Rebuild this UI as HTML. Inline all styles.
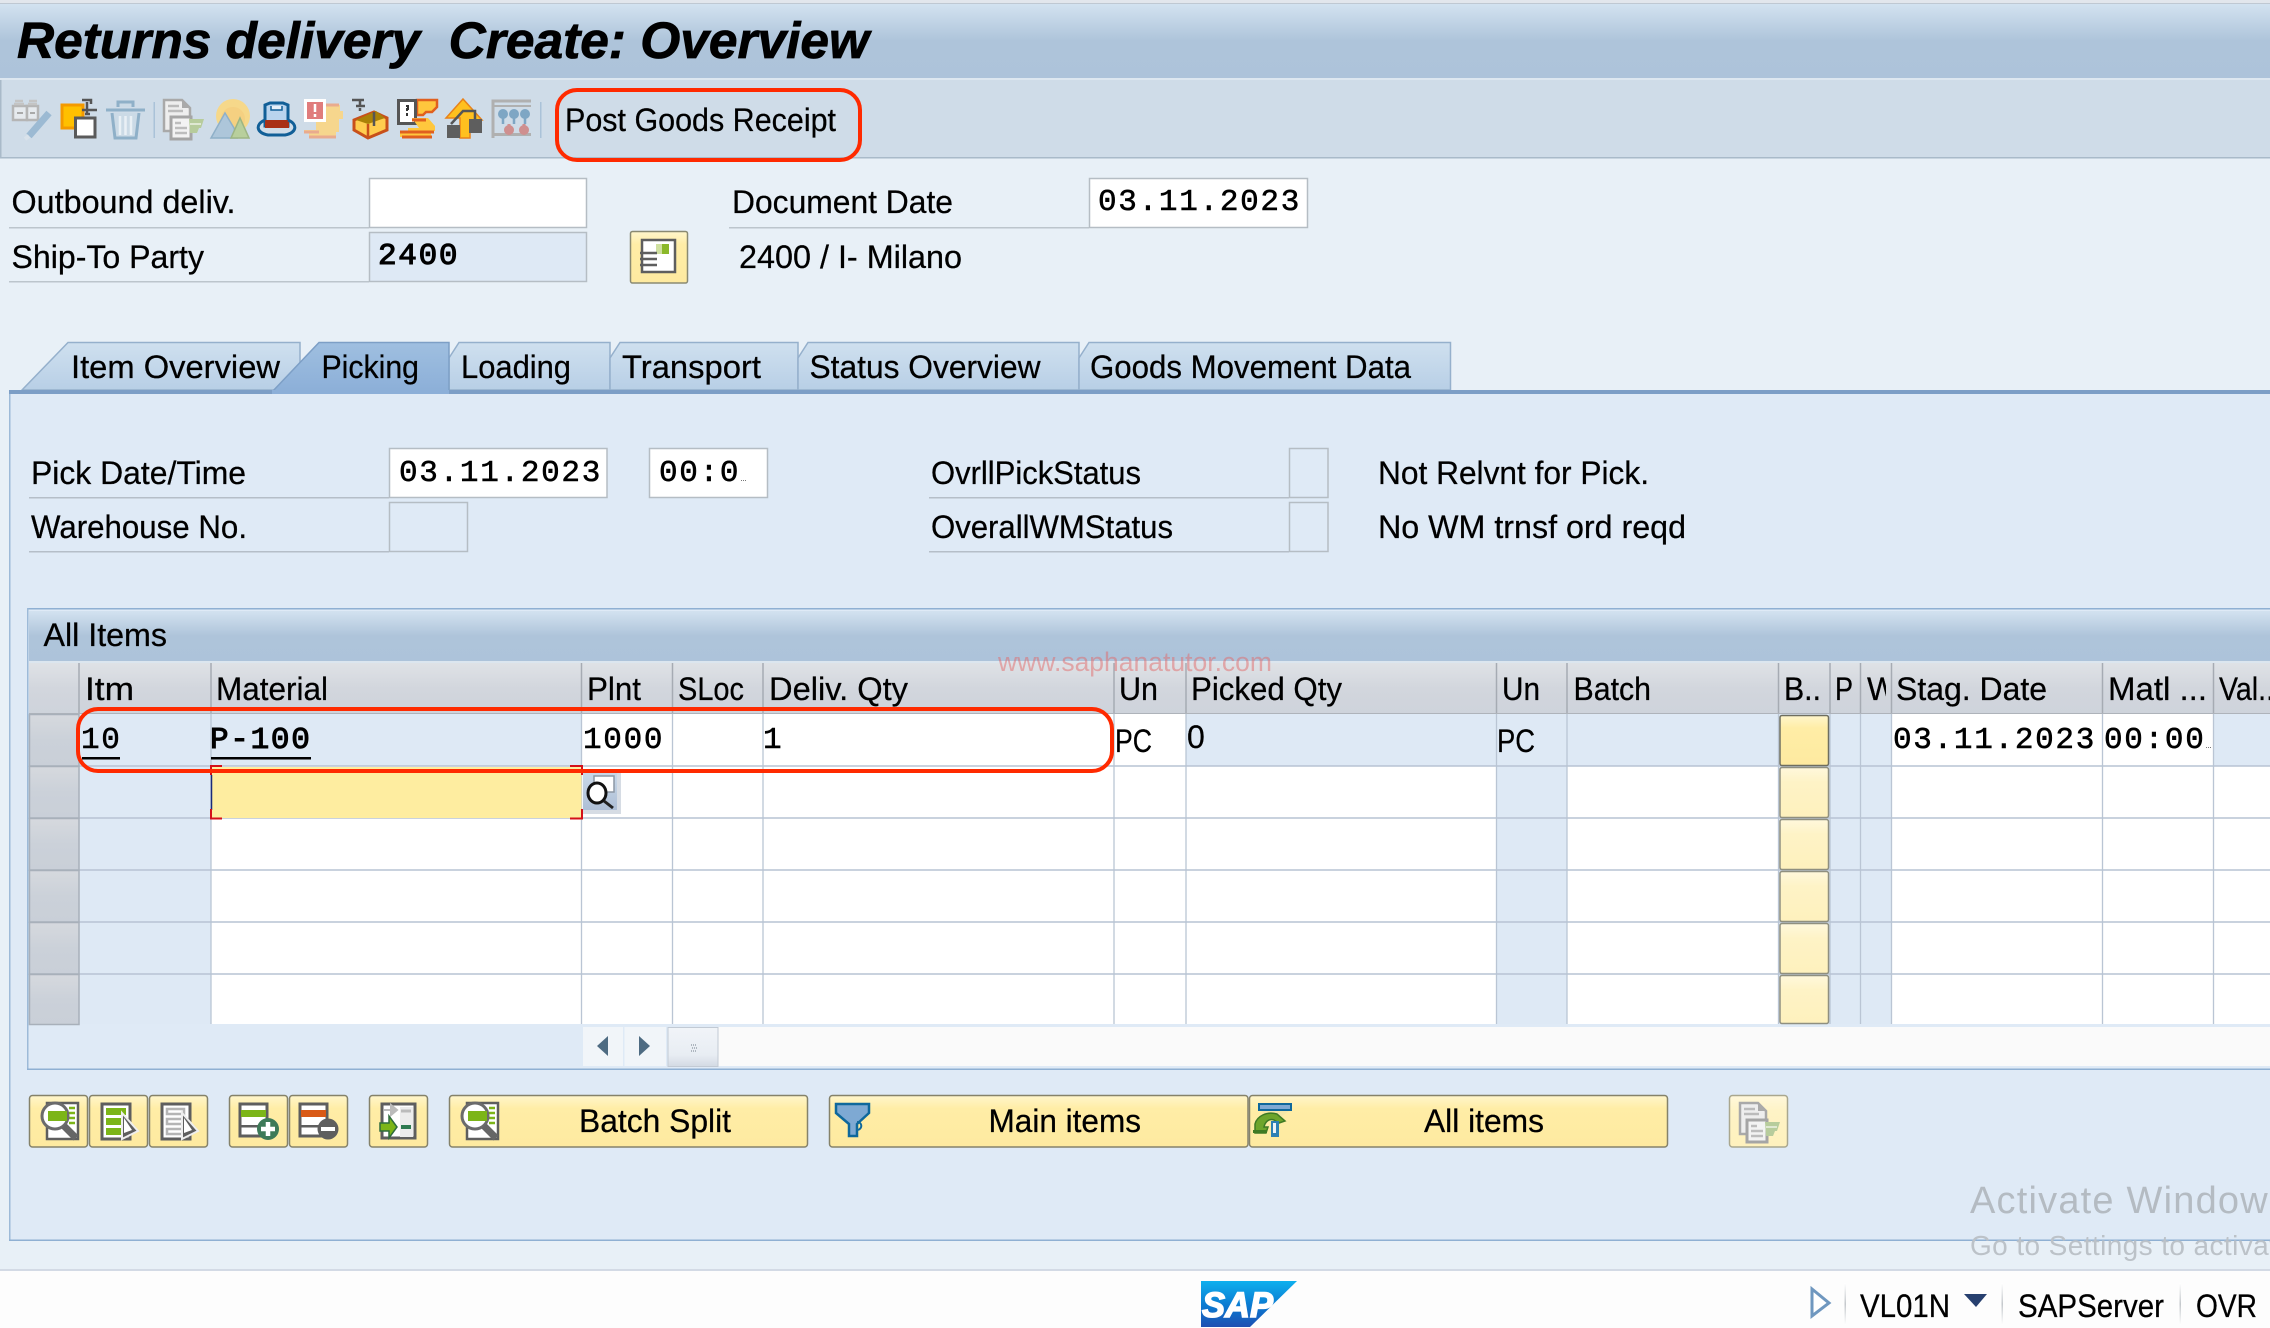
<!DOCTYPE html>
<html lang="en"><head><meta charset="utf-8"><title>Returns delivery Create: Overview</title>
<style>
html,body{margin:0;padding:0;background:#e8f0f7;overflow:hidden;width:2270px;height:1328px}
svg{display:block}
text{font-family:"Liberation Sans",Arial,sans-serif;font-size:32px;fill:#000;white-space:pre;stroke:#000;stroke-width:.25px}
.m{font-family:"Liberation Mono","Courier New",monospace;font-size:31px;letter-spacing:1.7px;stroke:#000;stroke-width:.55px}
.b{stroke-width:1.1px}
</style></head><body>
<svg xmlns="http://www.w3.org/2000/svg" width="2270" height="1328" viewBox="0 0 2270 1328">
<defs>
<linearGradient id="gT" x1="0" y1="0" x2="0" y2="1"><stop offset="0" stop-color="#d3e2f0"/><stop offset=".5" stop-color="#aec4da"/><stop offset="1" stop-color="#adc3da"/></linearGradient>
<linearGradient id="gH" x1="0" y1="0" x2="0" y2="1"><stop offset="0" stop-color="#dfe2e6"/><stop offset=".5" stop-color="#d2d6dd"/><stop offset="1" stop-color="#ced3db"/></linearGradient>
<linearGradient id="gS" x1="0" y1="0" x2="0" y2="1"><stop offset="0" stop-color="#d6d9de"/><stop offset=".5" stop-color="#cbd1d9"/><stop offset="1" stop-color="#c9cfd8"/></linearGradient>
<linearGradient id="gTab" x1="0" y1="0" x2="0" y2="1"><stop offset="0" stop-color="#cfe0ef"/><stop offset="1" stop-color="#b8cfe6"/></linearGradient>
<linearGradient id="gAct" x1="0" y1="0" x2="0" y2="1"><stop offset="0" stop-color="#9fbfe0"/><stop offset="1" stop-color="#8cafd8"/></linearGradient>
<linearGradient id="gBtn" x1="0" y1="0" x2="0" y2="1"><stop offset="0" stop-color="#fff6cc"/><stop offset=".25" stop-color="#ffeda6"/><stop offset="1" stop-color="#feeaa0"/></linearGradient>
<linearGradient id="gBtn2" x1="0" y1="0" x2="0" y2="1"><stop offset="0" stop-color="#fff8dc"/><stop offset=".3" stop-color="#fef3c6"/><stop offset="1" stop-color="#fef1bd"/></linearGradient>
<linearGradient id="gThumb" x1="0" y1="0" x2="0" y2="1"><stop offset="0" stop-color="#f1f4f8"/><stop offset=".7" stop-color="#e8edf3"/><stop offset="1" stop-color="#d3dae4"/></linearGradient>
<linearGradient id="gSap" x1="0" y1="0" x2="0" y2="1"><stop offset="0" stop-color="#0fb0ee"/><stop offset=".55" stop-color="#0b78d0"/><stop offset="1" stop-color="#1d4fb2"/></linearGradient>
<linearGradient id="gSep" x1="0" y1="0" x2="0" y2="1"><stop offset="0" stop-color="#fff"/><stop offset=".5" stop-color="#c4c8cc"/><stop offset="1" stop-color="#fff"/></linearGradient>
<linearGradient id="gF4" x1="0" y1="0" x2="0" y2="1"><stop offset="0" stop-color="#c9d8e8"/><stop offset="1" stop-color="#aebfd6"/></linearGradient>
<clipPath id="cW"><rect x="1861" y="664" width="25" height="50"/></clipPath>

<g id="docs">
<path d="M1 0H19L27 8V31H1Z" fill="#eee" stroke="#a9a9a9" stroke-width="2.5"/>
<path d="M5 6H16M5 11H20" stroke="#bbb" stroke-width="2.5"/>
<path d="M19 0V8H27Z" fill="#aaa"/>
<rect x="8" y="17" width="20" height="22" fill="#f3f3f3" stroke="#a5a5a5" stroke-width="3"/>
<path d="M12 23H18M12 28H24M12 33H24" stroke="#bdbdbd" stroke-width="2.5"/>
<path d="M26 19H41L38 28H36L34 33H27Z" fill="#b7cc9c"/>
<path d="M27 24H38" stroke="#dfe8d2" stroke-width="2"/>
</g>

<g id="magdoc">
<rect x="18" y="6" width="31" height="36" fill="#fff" stroke="#5e5e5e" stroke-width="2.5"/>
<path d="M40 11h6M40 16h6M40 21h6M40 26h6" stroke="#7cb518" stroke-width="2.5"/>
<circle cx="26" cy="19" r="13" fill="#fff" stroke="#6b6b6b" stroke-width="3"/>
<rect x="19" y="14" width="19" height="10" fill="#7cb518"/>
<path d="M35 29L47 41" stroke="#666" stroke-width="7"/>
</g>
</defs>

<!-- window background -->
<rect width="2270" height="1328" fill="#e8f0f7"/>
<rect width="2270" height="3" fill="#e2e6ec"/>
<rect y="3" width="2270" height="1" fill="#bfc8d2"/>
<!-- title bar -->
<rect y="4" width="2270" height="74" fill="url(#gT)"/>
<rect y="78" width="2270" height="2" fill="#dde7f0"/>
<text x="17" y="58" textLength="852" lengthAdjust="spacingAndGlyphs" font-weight="bold" font-style="italic" style="font-size:51px;stroke:#000;stroke-width:.8px">Returns delivery  Create: Overview</text>
<!-- toolbar -->
<rect y="80" width="2270" height="77" fill="#cfdce8"/>
<rect y="157" width="2270" height="1.5" fill="#a9bac9"/>
<rect y="80" width="1.5" height="77" fill="#a9bac9"/>

<!-- toolbar icons -->
<g id="tb">
<!-- 1 find/replace -->
<g fill="#e6eaee" stroke="#b5b5b5" stroke-width="2.5"><rect x="13" y="106" width="14" height="14"/><rect x="27" y="106" width="11" height="14"/></g>
<path d="M15 101h8M29 101h8M14 104h10M28 104h9" stroke="#c4c4c4" stroke-width="2.5"/>
<path d="M17 113h6M30 113h5" stroke="#a9a9a9" stroke-width="2"/>
<path d="M49 113L29 136" stroke="#9cbad3" stroke-width="7"/><path d="M29 136l-4 3" stroke="#d9e2ea" stroke-width="4"/>
<!-- 2 -->
<rect x="62" y="105" width="21" height="23" fill="#ffc000" stroke="#f49a00" stroke-width="3"/>
<rect x="75.5" y="118" width="19.5" height="19" fill="#fff" stroke="#5a5a5a" stroke-width="3"/>
<path d="M82 100h9v4M87 102v11M82 110h15M85 114h5" stroke="#555" stroke-width="2.5" fill="none"/>
<!-- 3 trash -->
<path d="M106 110h39M118 107v-5h15v5M112 113l3 25h21l3-25" fill="#cbdae6" stroke="#8fb0c8" stroke-width="3"/>
<path d="M120 116v19M125.500 116v19M131 116v19" stroke="#e9f0f5" stroke-width="2.500"/>
<rect x="153.500" y="102" width="1.500" height="36" fill="#aac2d8"/>
<!-- 4 -->
<use href="#docs" x="163" y="100"/>
<!-- 5 -->
<circle cx="233" cy="116" r="17" fill="#f6d88a"/>
<circle cx="233" cy="119" r="12" fill="#f3c877" opacity=".5"/>
<path d="M211 138L225 113L234 128L237 138Z" fill="#adc6da" stroke="#8fb0c8" stroke-width="1.500"/>
<path d="M231 138L240 118L249 138Z" fill="#b8cf9c" stroke="#9db583" stroke-width="1.500"/>
<!-- 6 hat -->
<path d="M265 126V105L270 103H283L288 105V126Z" fill="#b9d4ee" stroke="#115f97" stroke-width="3"/>
<path d="M271 106v4h11v-4" fill="#e6f0f9" stroke="#115f97" stroke-width="1.500"/>
<path d="M265 120h24v8H265z" fill="#a92f15"/>
<path d="M265 120C255 124 256 133 268 135H285C297 133 298 124 288 120" fill="none" stroke="#115f97" stroke-width="3"/>
<!-- 7 alert -->
<path d="M322 105h18v6h3v8h-4v13h-3v6H309v-6h-5v-2h12V113Z" fill="#f6d68d"/>
<path d="M309 137h27M304 132h15M325 105h14" stroke="#e9ab8e" stroke-width="3"/>
<rect x="304" y="99" width="22" height="23" fill="#fff"/>
<rect x="307" y="102" width="16" height="17" fill="#e07c7c"/>
<path d="M315 104v8M315 114v3" stroke="#fff" stroke-width="2.500"/>
<!-- 8 box -->
<path d="M352 100h12M360 100v5M356 106h9M360 108v3" stroke="#555" stroke-width="2.500" fill="none"/>
<path d="M354 120L374 112L387 118V130L368 138L354 130Z" fill="#ffcd4f" stroke="#c8501a" stroke-width="3"/>
<path d="M356 120L376 111L385 118L368 124Z" fill="#aa8208"/>
<path d="M374 112v14" stroke="#555" stroke-width="2.500"/>
<path d="M368 124v13" stroke="#c8501a" stroke-width="2.500"/>
<!-- 9 -->
<path d="M417 100h20v7l-5 5h-6l-3 3h-6z" fill="#ffc73d" stroke="#e0601f" stroke-width="2.500"/>
<rect x="398.500" y="100.500" width="17" height="23" fill="#fff" stroke="#555" stroke-width="3"/>
<path d="M406 106h2v3h-1v2M407 113v3" stroke="#333" stroke-width="2" fill="none"/>
<path d="M412 118h16l7 8v5h-4v6H400v-5h8v-4h11z" fill="#ffc73d"/>
<path d="M400 132h34M402 137h30M412 120h14" stroke="#e0601f" stroke-width="3"/>
<!-- 10 house -->
<path d="M463 99L482 120H470V138H460V118H446Z" fill="#ffc01f" stroke="#e8821a" stroke-width="1.500"/>
<rect x="447" y="125" width="13" height="13" fill="#5e5e5e"/>
<rect x="469" y="119" width="13" height="14" fill="#5e5e5e"/>
<path d="M451 124L463 111H475V119" fill="none" stroke="#555" stroke-width="2.500"/>
<!-- 11 shelf -->
<path d="M493 138V101H531" fill="none" stroke="#b0b0b0" stroke-width="3"/>
<rect x="493" y="105" width="38" height="2" fill="#b0b0b0"/>
<rect x="493" y="133" width="38" height="3" fill="#b0b0b0"/>
<g fill="#7ea6c4"><circle cx="503" cy="114" r="5"/><circle cx="514" cy="114" r="5"/><circle cx="525" cy="114" r="5"/></g>
<g stroke="#7ea6c4" stroke-width="2.500"><path d="M503 118v6M514 118v6M525 118v6"/></g>
<g fill="#cf8f8f"><circle cx="509" cy="130" r="5"/><circle cx="524" cy="130" r="5"/><rect x="507.500" y="124" width="3" height="3"/><rect x="522.500" y="124" width="3" height="3"/></g>
<rect x="540" y="102" width="1.500" height="36" fill="#aac2d8"/>
</g>

<rect x="557" y="90" width="303" height="70" rx="20" fill="none" stroke="#ff2a00" stroke-width="4"/>
<text x="565" y="131" textLength="271" lengthAdjust="spacingAndGlyphs">Post Goods Receipt</text>

<!-- upper header -->
<text x="11.500" y="213" textLength="224" lengthAdjust="spacingAndGlyphs">Outbound deliv.</text>
<rect x="9" y="227" width="360" height="1.500" fill="#bcc5cc"/>
<rect x="369.500" y="178.500" width="217" height="49" fill="#fff" stroke="#b5bdc4" stroke-width="1.500"/>
<text x="11.500" y="268" textLength="192.500" lengthAdjust="spacingAndGlyphs">Ship-To Party</text>
<rect x="9" y="281" width="360" height="1.500" fill="#bcc5cc"/>
<rect x="369.500" y="232.500" width="217" height="49" fill="#dee9f5" stroke="#b5bdc4" stroke-width="1.500"/>
<text x="378" y="264" class="m b">2400</text>
<rect x="630.500" y="231.500" width="57" height="51.500" rx="2" fill="url(#gBtn)" stroke="#8a8a72" stroke-width="1.500"/>
<rect x="642" y="240" width="33" height="32" fill="#fff" stroke="#5e5e5e" stroke-width="2.500"/>
<rect x="656" y="244" width="13" height="10" fill="#8bb82a"/><rect x="656" y="244" width="6" height="10" fill="#cfe0a0"/>
<path d="M640 253h17M640 259h17M640 265h17" stroke="#5e5e5e" stroke-width="2.500"/>
<text x="732" y="213" textLength="221" lengthAdjust="spacingAndGlyphs">Document Date</text>
<rect x="729" y="227" width="360" height="1.500" fill="#bcc5cc"/>
<rect x="1089.500" y="178.500" width="218" height="49" fill="#fff" stroke="#b5bdc4" stroke-width="1.500"/>
<text x="1098" y="210" class="m">03.11.2023</text>
<text x="739" y="268" textLength="223" lengthAdjust="spacingAndGlyphs">2400 / I- Milano</text>

<!-- panel -->
<rect x="9" y="390" width="2261" height="850" fill="#dfeaf6"/>
<rect x="9" y="392" width="1.500" height="848" fill="#9dbad8"/>
<rect x="9" y="1239.500" width="2261" height="1.500" fill="#8fb0d3"/>
<!-- tabs -->
<path d="M22 390L68 342.500H300V390Z" fill="url(#gTab)" stroke="#95b0cc" stroke-width="1.500"/>
<path d="M449 390V358L459 342.500H610V390Z" fill="url(#gTab)" stroke="#95b0cc" stroke-width="1.500"/>
<path d="M610 390V358L620 342.500H798V390Z" fill="url(#gTab)" stroke="#95b0cc" stroke-width="1.500"/>
<path d="M798 390V358L808 342.500H1079V390Z" fill="url(#gTab)" stroke="#95b0cc" stroke-width="1.500"/>
<path d="M1079 390V358L1089 342.500H1450.500V390Z" fill="url(#gTab)" stroke="#95b0cc" stroke-width="1.500"/>
<path d="M272 392L319 342.500H449V392Z" fill="url(#gAct)" stroke="#7d9fc6" stroke-width="1.500"/>
<rect x="9" y="390" width="2261" height="4" fill="#7c9ec6"/>
<rect x="272" y="390" width="177" height="4" fill="#8cafd8"/>
<text x="71" y="378" textLength="209" lengthAdjust="spacingAndGlyphs">Item Overview</text>
<text x="321.500" y="378" textLength="97.500" lengthAdjust="spacingAndGlyphs">Picking</text>
<text x="461" y="378" textLength="110" lengthAdjust="spacingAndGlyphs">Loading</text>
<text x="622" y="378" textLength="139" lengthAdjust="spacingAndGlyphs">Transport</text>
<text x="809.500" y="378" textLength="231" lengthAdjust="spacingAndGlyphs">Status Overview</text>
<text x="1090" y="378" textLength="321" lengthAdjust="spacingAndGlyphs">Goods Movement Data</text>

<!-- picking fields -->
<text x="31" y="484" textLength="215" lengthAdjust="spacingAndGlyphs">Pick Date/Time</text>
<rect x="29" y="497" width="360" height="1.500" fill="#b5bec8"/>
<rect x="389.500" y="448.500" width="217.500" height="49" fill="#fff" stroke="#b5bdc4" stroke-width="1.500"/>
<text x="399" y="481" class="m">03.11.2023</text>
<rect x="649.500" y="448.500" width="118" height="49" fill="#fff" stroke="#b5bdc4" stroke-width="1.500"/>
<text x="659" y="481" class="m">00:0</text>
<path d="M741 480.500h1M743 480.500h1M745 480.500h1" stroke="#777"/>
<text x="31" y="538" textLength="216" lengthAdjust="spacingAndGlyphs">Warehouse No.</text>
<rect x="29" y="551" width="360" height="1.500" fill="#b5bec8"/>
<rect x="389.500" y="502.500" width="78" height="49" fill="#dfeaf6" stroke="#b5bdc4" stroke-width="1.500"/>
<text x="931" y="484" textLength="210" lengthAdjust="spacingAndGlyphs">OvrllPickStatus</text>
<rect x="929" y="497" width="360" height="1.500" fill="#b5bec8"/>
<rect x="1289.500" y="448.500" width="38.500" height="49" fill="#dfeaf6" stroke="#b5bdc4" stroke-width="1.500"/>
<text x="931" y="538" textLength="242" lengthAdjust="spacingAndGlyphs">OverallWMStatus</text>
<rect x="929" y="551" width="360" height="1.500" fill="#b5bec8"/>
<rect x="1289.500" y="502.500" width="38.500" height="49" fill="#dfeaf6" stroke="#b5bdc4" stroke-width="1.500"/>
<text x="1378" y="484" textLength="271" lengthAdjust="spacingAndGlyphs">Not Relvnt for Pick.</text>
<text x="1378" y="538" textLength="308" lengthAdjust="spacingAndGlyphs">No WM trnsf ord reqd</text>

<!-- table frame -->
<rect x="27" y="608" width="2243" height="1.500" fill="#8fb0d3"/>
<rect x="27" y="608" width="1.500" height="461" fill="#9dbad8"/>
<rect x="27" y="1068.500" width="2243" height="1.500" fill="#8fb0d3"/>
<rect x="29" y="611" width="2241" height="50" fill="url(#gT)"/>
<rect x="29" y="661" width="2241" height="2" fill="#dce6ef"/>
<text x="43.500" y="646" textLength="123.500" lengthAdjust="spacingAndGlyphs">All Items</text>
<!-- table header -->
<rect x="29" y="663" width="2241" height="51" fill="url(#gH)"/>
<path d="M79 663v51M211 663v51M581.500 663v51M672.500 663v51M763 663v51M1114 663v51M1186 663v51M1496.500 663v51M1567 663v51M1778.500 663v51M1830 663v51M1860.500 663v51M1891.500 663v51M2102.500 663v51M2213.500 663v51" stroke="#a6abb3" stroke-width="1.500"/>
<rect x="29" y="713" width="2241" height="1.500" fill="#aeb3ba"/>
<g>
<text x="85" y="700" textLength="49" lengthAdjust="spacingAndGlyphs">Itm</text>
<text x="216" y="700" textLength="112" lengthAdjust="spacingAndGlyphs">Material</text>
<text x="587" y="700" textLength="54" lengthAdjust="spacingAndGlyphs">Plnt</text>
<text x="678" y="700" textLength="66" lengthAdjust="spacingAndGlyphs">SLoc</text>
<text x="769" y="700" textLength="139" lengthAdjust="spacingAndGlyphs">Deliv. Qty</text>
<text x="1119" y="700" textLength="39" lengthAdjust="spacingAndGlyphs">Un</text>
<text x="1191" y="700" textLength="151" lengthAdjust="spacingAndGlyphs">Picked Qty</text>
<text x="1502" y="700" textLength="38" lengthAdjust="spacingAndGlyphs">Un</text>
<text x="1573.500" y="700" textLength="77.500" lengthAdjust="spacingAndGlyphs">Batch</text>
<text x="1784" y="700" textLength="37" lengthAdjust="spacingAndGlyphs">B..</text>
<text x="1835" y="700" textLength="18" lengthAdjust="spacingAndGlyphs">P</text>
<text x="1867" y="700" clip-path="url(#cW)">W</text>
<text x="1896" y="700" textLength="151" lengthAdjust="spacingAndGlyphs">Stag. Date</text>
<text x="2108" y="700" textLength="99" lengthAdjust="spacingAndGlyphs">Matl ...</text>
<text x="2219" y="700" textLength="55" lengthAdjust="spacingAndGlyphs">Val..</text>
</g>
<!-- rows background -->
<rect x="29" y="714" width="2241" height="310" fill="#fff"/>
<rect x="79" y="714" width="502.500" height="52" fill="#dee9f5"/>
<rect x="1186" y="714" width="592.500" height="52" fill="#dee9f5"/>
<rect x="2213.500" y="714" width="56.500" height="52" fill="#dee9f5"/>
<rect x="79" y="766" width="132" height="258" fill="#dee9f5"/>
<rect x="1496.500" y="766" width="70.500" height="258" fill="#dee9f5"/>
<rect x="1778.500" y="714" width="113" height="310" fill="#dee9f5"/>
<!-- grid -->
<path d="M211 714V1024M581.500 714V1024M672.500 714V1024M763 714V1024M1114 714V1024M1186 714V1024M1496.500 714V1024M1567 714V1024M1778.500 714V1024M1830 714V1024M1860.500 714V1024M1891.500 714V1024M2102.500 714V1024M2213.500 714V1024" stroke="#bac5d4" stroke-width="1.300"/>
<path d="M79 766H2270M79 818H2270M79 870H2270M79 922H2270M79 974H2270" stroke="#b7c3d3" stroke-width="1.500"/>
<!-- row selectors -->
<g fill="url(#gS)" stroke="#a8b0ba" stroke-width="1.500">
<rect x="29.500" y="714.500" width="49.500" height="51.500"/>
<rect x="29.500" y="766.500" width="49.500" height="51.500"/>
<rect x="29.500" y="818.500" width="49.500" height="51.500"/>
<rect x="29.500" y="870.500" width="49.500" height="51.500"/>
<rect x="29.500" y="922.500" width="49.500" height="51.500"/>
<rect x="29.500" y="974.500" width="49.500" height="50"/>
</g>
<!-- B buttons -->
<g stroke="#8f8f80" stroke-width="1.500">
<rect x="1780" y="715.500" width="48.500" height="50" rx="2" fill="url(#gBtn)" stroke="#6e6e60"/>
<rect x="1780" y="767.500" width="48.500" height="50" rx="2" fill="url(#gBtn2)"/>
<rect x="1780" y="819.500" width="48.500" height="50" rx="2" fill="url(#gBtn2)"/>
<rect x="1780" y="871.500" width="48.500" height="50" rx="2" fill="url(#gBtn2)"/>
<rect x="1780" y="923.500" width="48.500" height="50" rx="2" fill="url(#gBtn2)"/>
<rect x="1780" y="975.500" width="48.500" height="48" rx="2" fill="url(#gBtn2)"/>
</g>
<!-- row 1 text -->
<text x="81" y="748" class="m">10</text>
<rect x="82" y="757" width="38" height="2.500" fill="#000"/>
<text x="210" y="748" class="m b">P-100</text>
<rect x="211" y="757" width="100" height="2.500" fill="#000"/>
<text x="583" y="748" class="m">1000</text>
<text x="763" y="748" class="m">1</text>
<text x="1115" y="752" textLength="37" lengthAdjust="spacingAndGlyphs">PC</text>
<text x="1187" y="748">0</text>
<text x="1497" y="752" textLength="38" lengthAdjust="spacingAndGlyphs">PC</text>
<text x="1893" y="748" class="m">03.11.2023</text>
<text x="2104" y="748" class="m">00:00</text>
<path d="M2206 747.500h1M2208 747.500h1M2210 747.500h1" stroke="#777"/>
<!-- focused input -->
<rect x="211.500" y="767" width="370" height="51" fill="#feeda0"/>
<path d="M211.500 775V810" stroke="#1a2a7a" stroke-width="1.500"/>
<path d="M222 766H211V775M570 766H582V775M211 809V818.500H222M582 809V818.500H570" fill="none" stroke="#d4101a" stroke-width="2"/>
<!-- F4 -->
<rect x="583" y="773" width="38" height="41" fill="#d6dce4"/>
<rect x="583" y="773" width="34" height="37" fill="url(#gF4)"/>
<rect x="594" y="776" width="20" height="16" fill="#fff" stroke="#8c97a4" stroke-width="1.500"/>
<ellipse cx="597" cy="793" rx="9" ry="10" fill="#fff" stroke="#111" stroke-width="3"/>
<path d="M604 801L613 808" stroke="#222" stroke-width="3"/>
<!-- big red outline -->
<rect x="78" y="709" width="1034" height="62" rx="20" fill="none" stroke="#ff2a00" stroke-width="4"/>
<!-- watermark -->
<text x="998" y="671" textLength="274" lengthAdjust="spacingAndGlyphs" style="font-size:27px;fill:#e26a6a;fill-opacity:.5;stroke:none">www.saphanatutor.com</text>

<!-- scroll bar -->
<rect x="718" y="1027" width="1552" height="39" fill="#fafafa"/>
<rect x="583" y="1027" width="40" height="39" fill="#f1f5f9"/>
<rect x="624.500" y="1027" width="41.500" height="39" fill="#f1f5f9"/>
<rect x="668" y="1027.500" width="50" height="39" fill="url(#gThumb)" stroke="#c2cad4"/>
<path d="M608 1036V1056L597 1046Z" fill="#4e6b82"/>
<path d="M639 1036V1056L650 1046Z" fill="#4e6b82"/>
<path d="M691 1045h5M692 1048h5M691 1051h5" stroke="#9aa3ad" stroke-dasharray="1 1" stroke-width="1.500"/>

<!-- bottom buttons -->
<g fill="url(#gBtn)" stroke="#85826a" stroke-width="1.500">
<rect x="29.500" y="1095.500" width="58" height="51.500" rx="3"/>
<rect x="89.500" y="1095.500" width="58" height="51.500" rx="3"/>
<rect x="149.500" y="1095.500" width="58" height="51.500" rx="3"/>
<rect x="229.500" y="1095.500" width="58" height="51.500" rx="3"/>
<rect x="289.500" y="1095.500" width="58" height="51.500" rx="3"/>
<rect x="369.500" y="1095.500" width="58" height="51.500" rx="3"/>
<rect x="449.500" y="1095.500" width="358" height="51.500" rx="3"/>
<rect x="829.500" y="1095.500" width="418.500" height="51.500" rx="3"/>
<rect x="1249.500" y="1095.500" width="418" height="51.500" rx="3"/>
</g>
<rect x="1729.500" y="1095.500" width="58" height="51.500" rx="3" fill="url(#gBtn2)" stroke="#a9a78f" stroke-width="1.500"/>

<use href="#magdoc" x="29" y="1097"/>
<use href="#magdoc" x="449" y="1097"/>
<!-- B2 -->
<rect x="102" y="1104" width="28" height="35" fill="#fff" stroke="#5e5e5e" stroke-width="3"/>
<g fill="#7cb518"><rect x="106" y="1108" width="20" height="7"/><rect x="106" y="1118" width="20" height="7"/><rect x="106" y="1128" width="20" height="7"/></g>
<path d="M122 1113V1139L138 1131Z" fill="#5e5e5e" stroke="#eee" stroke-width="2"/>
<path d="M124 1118V1133L132 1130Z" fill="#fff"/>
<!-- B3 -->
<rect x="162" y="1104" width="28" height="35" fill="#fff" stroke="#5e5e5e" stroke-width="3"/>
<g fill="none" stroke="#b5b5b5" stroke-width="2.500"><rect x="167" y="1109" width="17" height="5"/><rect x="167" y="1119" width="17" height="5"/><rect x="167" y="1129" width="17" height="5"/></g>
<path d="M182 1113V1139L198 1131Z" fill="#5e5e5e" stroke="#eee" stroke-width="2"/>
<path d="M184 1118V1133L192 1130Z" fill="#fff"/>
<!-- B4 -->
<rect x="240" y="1104" width="27" height="32" fill="#fff" stroke="#5e5e5e" stroke-width="3"/>
<rect x="241" y="1110" width="25" height="7" fill="#7cb518"/>
<rect x="241" y="1125" width="25" height="2.500" fill="#5e5e5e"/>
<circle cx="268" cy="1129" r="11" fill="#3d7a58"/>
<path d="M268 1122v14M261 1129h14" stroke="#fff" stroke-width="4.500"/>
<!-- B5 -->
<rect x="300" y="1104" width="27" height="32" fill="#fff" stroke="#5e5e5e" stroke-width="3"/>
<rect x="301" y="1110" width="25" height="7" fill="#d95a16"/>
<rect x="301" y="1125" width="25" height="2.500" fill="#5e5e5e"/>
<circle cx="328" cy="1129" r="10.500" fill="#5e5e5e"/>
<path d="M321 1129h14" stroke="#fff" stroke-width="4"/>
<!-- B6 -->
<rect x="382" y="1104" width="33" height="34" fill="#fff" stroke="#5e5e5e" stroke-width="3"/>
<rect x="400" y="1107" width="13" height="30" fill="#ececec"/>
<path d="M384 1110h7M391 1105l6 5-6 5z" stroke="#bbb" stroke-width="2" fill="#bbb"/>
<path d="M401 1111h10" stroke="#bbb" stroke-width="3"/>
<path d="M380 1123h9v-7l8 11-8 11v-7h-9z" fill="#7cb518" stroke="#2e6b3c" stroke-width="1.500"/>
<path d="M401 1127h10" stroke="#2e7a50" stroke-width="4"/>
<!-- funnel -->
<path d="M836 1104H869V1113L857 1124V1136H849V1124L836 1113Z" fill="#7ea9d3" stroke="#0f689c" stroke-width="2.500"/>
<path d="M857 1122c5 0 6 6 1 8" fill="none" stroke="#0f689c" stroke-width="2"/>
<!-- all items icon -->
<path d="M1259 1104H1291V1110H1259Z" fill="#7ea9d3" stroke="#0f689c" stroke-width="2"/>
<path d="M1261 1111H1289L1280 1118H1270Z" fill="#f5e7a8"/>
<path d="M1255 1124c2-8 12-13 22-10l8 7-6 2-5-3c-5-2-9 2-10 7l4 0-2 6h-11z" fill="#6ea52b" stroke="#3f7a24" stroke-width="1.500"/>
<rect x="1253" y="1130" width="14" height="3" fill="#3f7a24"/>
<rect x="1271" y="1121" width="8" height="16" fill="#2e80b4"/>
<rect x="1273" y="1123" width="3" height="10" fill="#eef3f8"/>
<!-- text on buttons -->
<text x="579" y="1132" textLength="152" lengthAdjust="spacingAndGlyphs">Batch Split</text>
<text x="988.500" y="1132" textLength="152.500" lengthAdjust="spacingAndGlyphs">Main items</text>
<text x="1424" y="1132" textLength="120" lengthAdjust="spacingAndGlyphs">All items</text>
<use href="#docs" x="1739" y="1103"/>

<!-- Activate Windows -->
<text x="1970" y="1213" style="font-size:38px;fill:#b4bbc2;stroke:none;letter-spacing:1.200px">Activate Windows</text>

<!-- status bar -->
<rect y="1270" width="2270" height="58" fill="#fdfdfd"/>
<rect y="1269" width="2270" height="2" fill="#d3dae5"/>
<text x="1970" y="1255" style="font-size:28px;fill:#bcc2c8;stroke:none;letter-spacing:.4px">Go to Settings to activate Windows.</text>

<polygon points="1201,1281 1297,1281 1250,1327 1201,1327" fill="url(#gSap)"/>
<text x="1202" y="1317" textLength="71" lengthAdjust="spacingAndGlyphs" font-weight="bold" font-style="italic" style="font-size:35px;fill:#fff;stroke:#fff;stroke-width:1.500px">SAP</text>

<path d="M1812 1289L1829 1303L1812 1316Z" fill="#fff" stroke="#6f97bf" stroke-width="3"/>
<rect x="1844.500" y="1283" width="1.500" height="42" fill="url(#gSep)"/>
<rect x="2001.500" y="1283" width="1.500" height="42" fill="url(#gSep)"/>
<rect x="2179.500" y="1283" width="1.500" height="42" fill="url(#gSep)"/>
<text x="1860" y="1317" textLength="90" lengthAdjust="spacingAndGlyphs">VL01N</text>
<path d="M1964 1294H1987L1976 1307Z" fill="#27406f"/>
<text x="2018" y="1317" textLength="146" lengthAdjust="spacingAndGlyphs">SAPServer</text>
<text x="2196" y="1317" textLength="61" lengthAdjust="spacingAndGlyphs">OVR</text>
</svg>
</body></html>
